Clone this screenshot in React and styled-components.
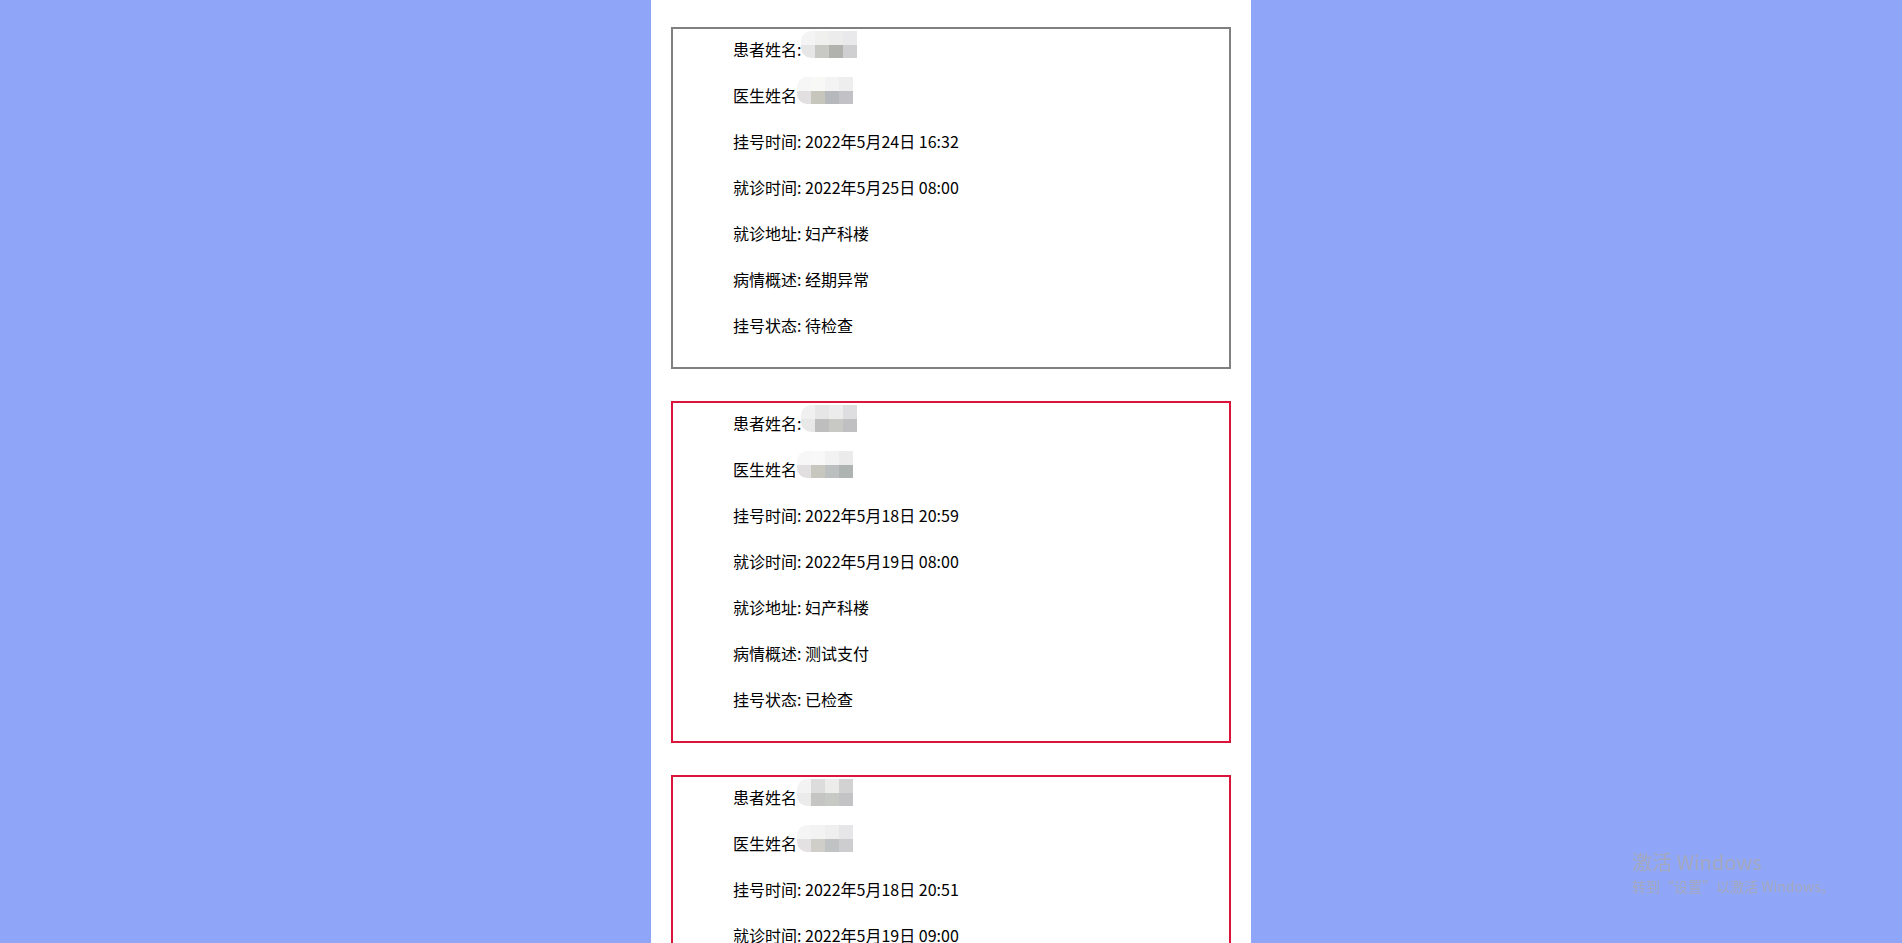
import React from 'react';
import styled, { createGlobalStyle } from 'styled-components';

const GlobalStyle = createGlobalStyle`
    html, body {
        margin: 0;
        padding: 0;
        background-color: #8fa6f8;
    }
    body {
        font-family: "Noto Sans CJK SC", "Noto Sans", sans-serif;
        color: #000;
    }
`;

const Page = styled.div`
    width: 600px;
    min-height: 100vh;
    margin: 0 auto;
    background-color: #fff;
    padding: 27px 20px 20px;
    box-sizing: border-box;
    display: flex;
    flex-direction: column;
    gap: 32px;
`;

const Card = styled.div`
    border: 2px solid ${({ $done }) => ($done ? '#dc143c' : '#808080')};
    padding: 5px 0 12px 60px;
    display: flex;
    flex-direction: column;
    gap: 16px;
    height: 342px;
    box-sizing: border-box;
`;

const Row = styled.div`
    height: 30px;
    font-size: 16px;
    line-height: 30px;
    display: flex;
    align-items: center;
    white-space: nowrap;
`;

const Mosaic = styled.div`
    display: grid;
    grid-template-columns: repeat(4, 14px);
    grid-template-rows: 14px 13px;
    margin-top: -10px;
    border-radius: 10px 0 0 10px;
    overflow: hidden;
`;

const Cell = styled.div`
    background-color: ${({ $c }) => $c};
`;

const Watermark = styled.div`
    position: fixed;
    left: 1632px;
    bottom: 46px;
    color: #a4a8bc;
    pointer-events: none;
`;

const WatermarkTitle = styled.div`
    font-size: 20px;
    line-height: 26px;
`;

const WatermarkSub = styled.div`
    font-size: 14px;
    line-height: 22px;
`;

const blur = [
    [
        ['#f4f4f4', '#f0f0ef', '#ececec', '#e9e9eb', '#e6e6e6', '#c8c9c5', '#b1b2ae', '#cfcfd2'],
        ['#f6f6f6', '#f8f8f7', '#f3f3f3', '#eeeeee', '#e2dfe0', '#c7c6bd', '#b6b9bb', '#c2c2c6'],
    ],
    [
        ['#f0f0f0', '#e6e6e6', '#ececec', '#dedee0', '#e8e8e8', '#bdbebd', '#c8c9c5', '#c0c0c3'],
        ['#f7f7f7', '#f8f8f8', '#f2f2f2', '#ebebec', '#e2dfe1', '#c8c7bf', '#bcbfbf', '#adb4b1'],
    ],
    [
        ['#f3f3f3', '#dcdcdc', '#ececea', '#d2d2d2', '#ebebeb', '#c5c6c4', '#c7c9c4', '#c3c3c6'],
        ['#f5f5f5', '#f3f3f3', '#efefef', '#e6e6e8', '#e4e1e2', '#cfcec8', '#bfc3c3', '#cdcdcf'],
    ],
];

const records = [
    {
        done: false,
        patientLabel: '患者姓名:',
        regTime: '2022年5月24日 16:32',
        visitTime: '2022年5月25日 08:00',
        address: '妇产科楼',
        desc: '经期异常',
        status: '待检查',
    },
    {
        done: true,
        patientLabel: '患者姓名:',
        regTime: '2022年5月18日 20:59',
        visitTime: '2022年5月19日 08:00',
        address: '妇产科楼',
        desc: '测试支付',
        status: '已检查',
    },
    {
        done: true,
        patientLabel: '患者姓名',
        regTime: '2022年5月18日 20:51',
        visitTime: '2022年5月19日 09:00',
        address: '妇产科楼',
        desc: '测试支付',
        status: '已检查',
    },
];

const Blurred = ({ colors }) => (
    <Mosaic>
        {colors.map((c, i) => (
            <Cell key={i} $c={c} />
        ))}
    </Mosaic>
);

const App = () => {
    return (
        <>
            <GlobalStyle />
            <Page>
                {records.map((r, idx) => (
                    <Card key={idx} $done={r.done}>
                        <Row>
                            {r.patientLabel}
                            <Blurred colors={blur[idx][0]} />
                        </Row>
                        <Row>
                            医生姓名
                            <Blurred colors={blur[idx][1]} />
                        </Row>
                        <Row>挂号时间: {r.regTime}</Row>
                        <Row>就诊时间: {r.visitTime}</Row>
                        <Row>就诊地址: {r.address}</Row>
                        <Row>病情概述: {r.desc}</Row>
                        <Row>挂号状态: {r.status}</Row>
                    </Card>
                ))}
            </Page>
            <Watermark>
                <WatermarkTitle>激活 Windows</WatermarkTitle>
                <WatermarkSub>转到“设置”以激活 Windows。</WatermarkSub>
            </Watermark>
        </>
    );
};

export default App;
